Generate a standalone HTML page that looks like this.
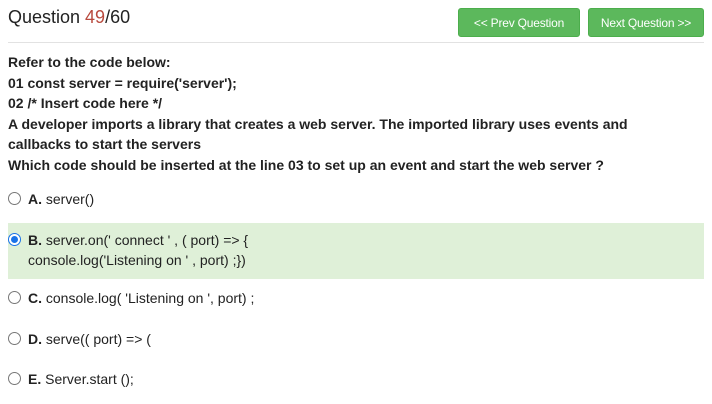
<!DOCTYPE html>
<html><head><meta charset="utf-8"><style>
body{margin:0;width:712px;height:404px;background:#fff;font-family:"Liberation Sans",Arial,sans-serif;color:#333;position:relative;overflow:hidden}
.a{position:absolute}
.t{left:8px;top:7px;font-size:18px;color:#222}
.btn{top:8px;height:29px;background:#5cb85c;border:1px solid #4cae4c;border-radius:3px;color:#fff;font-size:12px;line-height:29px;text-align:center;box-sizing:border-box;letter-spacing:-0.2px}
.hr{left:8px;width:696px;top:42px;height:1px;background:#e2e2e2}
.q{left:8px;top:52px;font-size:14px;font-weight:bold;line-height:20.6px;color:#222}
.o{left:8px;font-size:14px;color:#222;line-height:20px}
.r{position:absolute;left:0px;top:3px;width:13px;height:13px;border:1px solid #777;border-radius:50%;box-sizing:border-box;background:#fff}
.r.s{border:1px solid #1a73e8;background:#fff}
.r.s:after{content:"";position:absolute;left:2px;top:2px;width:7px;height:7px;border-radius:50%;background:#1a73e8}
.o span.x{margin-left:20px}
</style></head><body>
<div class="a t">Question <span style="color:#b94a3e">49</span>/60</div>
<div class="a btn" style="left:458px;width:122px">&lt;&lt; Prev Question</div>
<div class="a btn" style="left:588px;width:116px">Next Question &gt;&gt;</div>
<div class="a hr"></div>
<div class="a q">Refer to the code below:<br>01 const server = require('server');<br>02 /* Insert code here */<br>A developer imports a library that creates a web server. The imported library uses events and<br>callbacks to start the servers<br>Which code should be inserted at the line 03 to set up an event and start the web server ?</div>
<div class="a o" style="top:189px"><div class="r"></div><span class="x"><b>A.</b> server()</span></div>
<div class="a" style="left:8px;top:223px;width:696px;height:56px;background:#dff0d8"></div>
<div class="a o" style="top:230px"><div class="r s"></div><span class="x"><b>B.</b> server.on(' connect ' , ( port) =&gt; {</span><br><span class="x">console.log('Listening on ' , port) ;})</span></div>
<div class="a o" style="top:288px"><div class="r"></div><span class="x"><b>C.</b> console.log( 'Listening on ', port) ;</span></div>
<div class="a o" style="top:329px"><div class="r"></div><span class="x"><b>D.</b> serve(( port) =&gt; (</span></div>
<div class="a o" style="top:369px"><div class="r"></div><span class="x"><b>E.</b> Server.start ();</span></div>
</body></html>
